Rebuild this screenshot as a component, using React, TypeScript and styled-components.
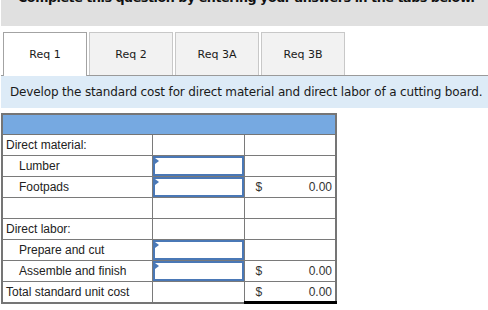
import React from "react";
import styled, { createGlobalStyle } from "styled-components";

const GlobalStyle = createGlobalStyle`
  html, body {
    margin: 0;
    padding: 0;
    background: #fff;
  }
`;

const Page = styled.div`
  width: 488px;
  height: 310px;
  overflow: hidden;
  padding: 0 0 0 1px;
  box-sizing: border-box;
  font-family: "DejaVu Sans", Verdana, sans-serif;
`;

const Banner = styled.div`
  height: 26px;
  background: #e0e0e0;
  overflow: hidden;
  font-weight: bold;
  font-size: 12.7px;
  letter-spacing: -0.45px;
  color: #111;
  padding-left: 17px;
  line-height: 12px;
  white-space: nowrap;
`;

const BannerText = styled.div`
  margin-top: -8px;
`;

const TabBar = styled.div`
  display: flex;
  gap: 2px;
  margin-top: 6px;
  padding-left: 2px;
  border-bottom: 1px solid #9a9a9a;
  height: 43px;
`;

const Tab = styled.div<{ $active?: boolean }>`
  width: 84px;
  height: ${(p) => (p.$active ? "44px" : "43px")};
  box-sizing: border-box;
  border: 1px solid ${(p) => (p.$active ? "#a3a3a3" : "#c8c8c8")};
  border-bottom: none;
  background: ${(p) => (p.$active ? "#fff" : "#f2f2f2")};
  display: flex;
  align-items: center;
  justify-content: center;
  font-size: 11px;
  color: #1a1a1a;
  position: relative;
  z-index: 1;
`;

const Instruction = styled.div`
  height: 32px;
  background: #ddebf7;
  display: flex;
  align-items: center;
  padding-left: 9px;
  font-size: 12px;
  letter-spacing: -0.15px;
  color: #1a1a1a;
  white-space: nowrap;
`;

const Table = styled.table`
  margin-top: 5px;
  width: 335px;
  table-layout: fixed;
  border-collapse: collapse;
  font-family: "Liberation Sans", Arial, sans-serif;
  font-size: 12px;
  color: #222;
  border: 2px solid #757575;
`;

const HeadCell = styled.td`
  height: 19px;
  background: #76a9e1;
  border: 1px solid #757575;
  padding: 0;
`;

const Cell = styled.td<{ $indent?: boolean; $short?: boolean }>`
  height: ${(p) => (p.$short ? "19px" : "20px")};
  border: 1px solid #7a7a7a;
  padding: 0 0 0 ${(p) => (p.$indent ? "16px" : "3px")};
  white-space: nowrap;
  overflow: hidden;
`;

const InputCell = styled.td`
  height: 20px;
  border: 1px solid #7a7a7a;
  padding: 0;
`;

const InputBox = styled.div`
  position: relative;
  height: 20px;
  box-sizing: border-box;
  border: 2px solid #4a78b6;
  background: #fff;
`;

const Flag = styled.span`
  position: absolute;
  left: 0;
  top: 0;
  width: 0;
  height: 0;
  border-top: 3px solid transparent;
  border-bottom: 3px solid transparent;
  border-left: 4px solid #4a78b6;
`;

const AmountCell = styled.td<{ $total?: boolean }>`
  height: ${(p) => (p.$total ? "19px" : "20px")};
  border: 1px solid #7a7a7a;
  padding: 0 3px 0 11px;
  ${(p) =>
    p.$total && `border-top: 1px solid #000; border-bottom: 3px solid #000;`}
`;

const Amount = styled.div`
  display: flex;
  justify-content: space-between;
  color: #333;
`;

type Row =
  | { kind: "label"; text: string }
  | { kind: "input"; text: string; amount?: string }
  | { kind: "blank" }
  | { kind: "total"; text: string; amount: string };

const rows: Row[] = [
  { kind: "label", text: "Direct material:" },
  { kind: "input", text: "Lumber" },
  { kind: "input", text: "Footpads", amount: "0.00" },
  { kind: "blank" },
  { kind: "label", text: "Direct labor:" },
  { kind: "input", text: "Prepare and cut" },
  { kind: "input", text: "Assemble and finish", amount: "0.00" },
  { kind: "total", text: "Total standard unit cost", amount: "0.00" },
];

const tabs = ["Req 1", "Req 2", "Req 3A", "Req 3B"];

function Money({ value }: { value: string }) {
  return (
    <Amount>
      <span>$</span>
      <span>{value}</span>
    </Amount>
  );
}

export default function App() {
  return (
    <Page>
      <GlobalStyle />
      <Banner>
        <BannerText>
          Complete this question by entering your answers in the tabs below.
        </BannerText>
      </Banner>
      <TabBar>
        {tabs.map((t, i) => (
          <Tab key={t} $active={i === 0}>
            {t}
          </Tab>
        ))}
      </TabBar>
      <Instruction>
        Develop the standard cost for direct material and direct labor of a
        cutting board.
      </Instruction>
      <Table>
        <colgroup>
          <col style={{ width: 150 }} />
          <col style={{ width: 92 }} />
          <col style={{ width: 92 }} />
        </colgroup>
        <tbody>
          <tr>
            <HeadCell colSpan={3} />
          </tr>
          {rows.map((r, i) => {
            if (r.kind === "blank") {
              return (
                <tr key={i}>
                  <Cell />
                  <Cell />
                  <Cell />
                </tr>
              );
            }
            if (r.kind === "label") {
              return (
                <tr key={i}>
                  <Cell>{r.text}</Cell>
                  <Cell />
                  <Cell />
                </tr>
              );
            }
            if (r.kind === "input") {
              return (
                <tr key={i}>
                  <Cell $indent>{r.text}</Cell>
                  <InputCell>
                    <InputBox>
                      <Flag />
                    </InputBox>
                  </InputCell>
                  <AmountCell>{r.amount && <Money value={r.amount} />}</AmountCell>
                </tr>
              );
            }
            return (
              <tr key={i}>
                <Cell $short>{r.text}</Cell>
                <Cell $short />
                <AmountCell $total>
                  <Money value={r.amount} />
                </AmountCell>
              </tr>
            );
          })}
        </tbody>
      </Table>
    </Page>
  );
}
